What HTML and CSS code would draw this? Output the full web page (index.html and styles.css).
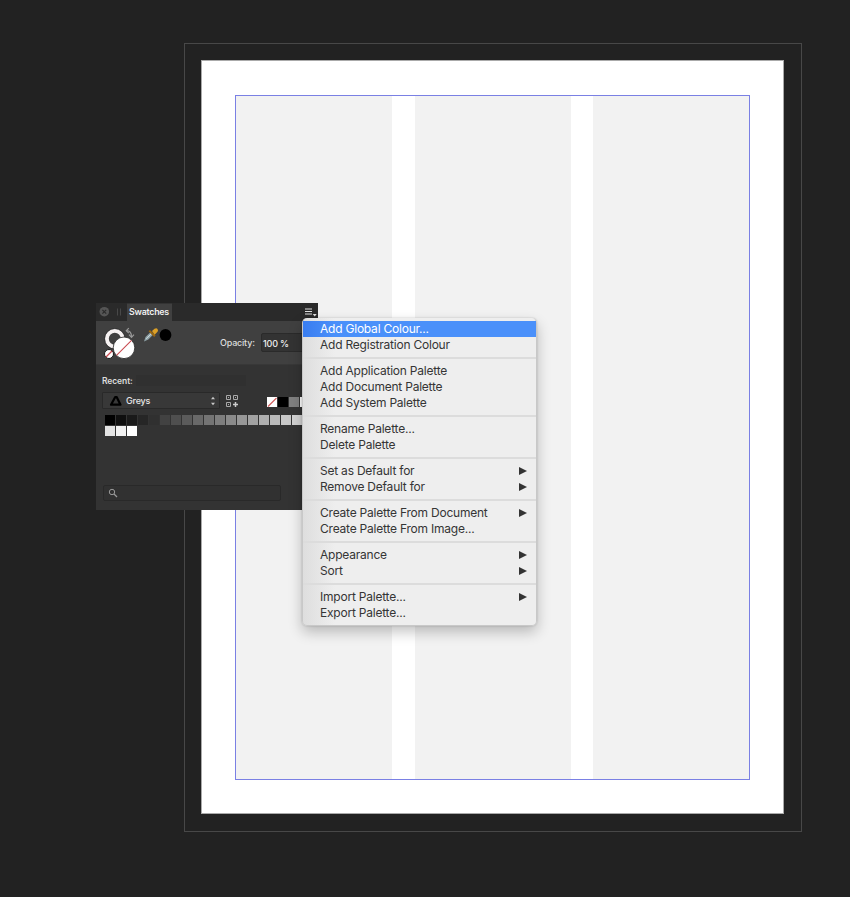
FILE: index.html
```
<!DOCTYPE html>
<html lang="en">
<head>
<meta charset="utf-8">
<title>Swatches</title>
<link rel="stylesheet" href="styles.css">
</head>
<body>
<main class="workspace">
  <div class="bleed">
    <div class="page">
      <div class="margins">
        <div class="column"></div>
        <div class="column"></div>
        <div class="column"></div>
      </div>
    </div>
  </div>

  <section class="panel">
    <header class="panel-header">
      <svg class="header-controls" width="32" height="18" viewBox="0 0 32 18">
        <circle cx="8.300" cy="8.700" r="4.800" fill="#555"/>
        <path d="M6.400 6.800l3.800 3.800M10.200 6.800l-3.800 3.800" stroke="#2b2b2b" stroke-width="1.200"/>
        <path d="M21.500 5.500v7M24.500 5.500v7" stroke="#484848"/>
      </svg>
      <span class="tab">Swatches</span>
      <svg class="header-menu" width="16" height="18" viewBox="0 0 16 18">
        <path d="M3 6h7M3 8.500h7M3 11h7" stroke="#e0e0e0" stroke-width="1.200"/>
        <path d="M10.700 11h4l-2 2.500z" fill="#e0e0e0"/>
      </svg>
    </header>
    <div class="toolbar">
      <svg class="tools" width="84" height="44" viewBox="0 0 84 44">
        <circle cx="18.800" cy="17.800" r="8" fill="none" stroke="#f6f2f2" stroke-width="4"/>
        <circle cx="18.800" cy="17.800" r="10.200" fill="none" stroke="#222" stroke-width=".6"/>
        <circle cx="28" cy="26.800" r="10.800" fill="#fff" stroke="#222" stroke-width=".8"/>
        <path d="M20.500 34.300l15-15" stroke="#c94a50" stroke-width="1.100"/>
        <circle cx="13" cy="33" r="4.500" fill="#fff" stroke="#181818"/>
        <path d="M10 36l6-6" stroke="#c94a50" stroke-width="1.200"/>
        <path d="M30.500 9.700q5 0 5 6.300" fill="none" stroke="#999" stroke-width="1.200"/>
        <path d="M32.800 7.200l-2.500 2.500 2.500 2.500M33 13.700l2.500 2.600 2.500-2.600" fill="none" stroke="#999" stroke-width="1.200"/>
        <path d="M48 20.500l1.500-4.500 5.500-5.300 2.600 2.600-5.300 5.300z" fill="#8fa3a8"/>
        <path d="M50.200 17.900l5.400-5.400" stroke="#d1dadd"/>
        <path d="M53.300 9.600l5.600 5.600" stroke="#9b6710" stroke-width="2"/>
        <path d="M56 10l2.500-2.200q2-1.200 3 .2t0 2.800l-2.800 2.900z" fill="#dda026"/>
        <circle cx="69.500" cy="14" r="5.900" fill="#000"/>
      </svg>
      <span class="opacity-label">Opacity:</span>
      <span class="opacity-field">100 %</span>
    </div>
    <div class="panel-body">
      <div class="recent"><span class="recent-label">Recent:</span><span class="recent-well"></span></div>
      <div class="palette-row">
        <div class="select">
          <svg width="14" height="16" viewBox="0 0 14 16"><path d="M6.100 4.200L2 11.700h9.500L7.800 4.200z" fill="none" stroke="#000" stroke-width="2.200" stroke-linejoin="round"/></svg>
          <span class="select-value">Greys</span>
          <svg width="8" height="16" viewBox="0 0 8 16"><path d="M2 6.200h4L4 3.700zM2 9.800h4l-2 2.500z" fill="#c8c8c8"/></svg>
        </div>
        <svg class="view-icon" width="14" height="14" viewBox="0 0 14 14">
          <g fill="none" stroke="#aaa"><path d="M1.500 1.500h4v4h-4zM8.500 1.500h4v4h-4zM1.500 8.500h4v4h-4z"/><path d="M3 3.500h1M10 3.500h1M3 10.500h1"/><path d="M8 10.500h5M10.500 8v5" stroke="#ccc" stroke-width="1.500"/></g>
        </svg>
        <div class="quick">
          <span class="none"><svg width="10" height="10" viewBox="0 0 10 10"><path d="M1 9.500L9.500 1" stroke="#d05858" stroke-width="1.100"/></svg></span><span class="black"></span><span class="mid"></span><span class="white"></span>
        </div>
      </div>
      <div class="swatches">
        <i class="g0"></i><i class="g1"></i><i class="g2"></i><i class="g3"></i><i class="g4"></i><i class="g5"></i><i class="g6"></i><i class="g7"></i><i class="g8"></i><i class="g9"></i><i class="g10"></i><i class="g11"></i><i class="g12"></i><i class="g13"></i><i class="g14"></i><i class="g15"></i><i class="g16"></i><i class="g17"></i><i class="g18"></i><i class="g19"></i><i class="g20"></i>
      </div>
      <div class="search">
        <svg width="10" height="10" viewBox="0 0 10 10"><circle cx="4" cy="4" r="2.700" fill="none" stroke="#999"/><path d="M6 6l3 3" stroke="#999" stroke-width="1.200"/></svg>
      </div>
    </div>
  </section>

  <ul class="menu">
    <li class="item active"><span>Add Global Colour...</span></li>
    <li class="item"><span>Add Registration Colour</span></li>
    <li class="separator"></li>
    <li class="item"><span>Add Application Palette</span></li>
    <li class="item"><span>Add Document Palette</span></li>
    <li class="item"><span>Add System Palette</span></li>
    <li class="separator"></li>
    <li class="item"><span>Rename Palette...</span></li>
    <li class="item"><span>Delete Palette</span></li>
    <li class="separator"></li>
    <li class="item more"><span>Set as Default for</span></li>
    <li class="item more"><span>Remove Default for</span></li>
    <li class="separator"></li>
    <li class="item more"><span>Create Palette From Document</span></li>
    <li class="item"><span>Create Palette From Image...</span></li>
    <li class="separator"></li>
    <li class="item more"><span>Appearance</span></li>
    <li class="item more"><span>Sort</span></li>
    <li class="separator"></li>
    <li class="item more"><span>Import Palette...</span></li>
    <li class="item"><span>Export Palette...</span></li>
  </ul>
</main>
</body>
</html>
```
FILE: styles.css
```
* { box-sizing: border-box; }
body { margin: 0; background: #222; font-family: Inter, "Liberation Sans", sans-serif; }
svg { display: block; flex: none; }
.workspace { position: relative; width: 850px; height: 897px; overflow: hidden; padding: 43px 0 0 184px; background: #222; }

.bleed { width: 618px; height: 789px; border: 1px solid #484848; padding: 16px; }
.page { width: 583px; height: 754px; background: #fff; border: 1px solid #aaa; padding: 34px 33px; }
.margins { display: flex; justify-content: space-between; width: 515px; height: 685px; border: 1px solid #7a80e4; }
.column { width: 156px; background: #f2f2f2; }

.panel { position: absolute; left: 96px; top: 303px; width: 222px; height: 207px; background: #333; color: #ddd; font-size: 9px; }
.panel-header { display: flex; height: 18px; background: #2a2a2a; }
.header-controls { margin-right: -1px; }
.tab { width: 45px; height: 18px; padding-left: 2px; border-top: 1px solid #333; background: #404040; color: #f0f0f0; font-size: 8.8px; font-weight: 600; line-height: 16px; letter-spacing: -0.22px; white-space: nowrap; }
.header-menu { margin-left: auto; }
.toolbar { display: flex; align-items: center; height: 44px; background: #404040; border-bottom: 1px solid #383838; }
.opacity-label { width: 41px; margin-left: 40px; font-weight: 500; letter-spacing: -0.2px; }
.opacity-field { width: 57px; height: 19px; padding: 1px 0 0 1px; background: #333; border: 1px solid #2a2a2a; border-radius: 2px; color: #eee; font-weight: 500; line-height: 17px; letter-spacing: -0.2px; }
.panel-body { height: 145px; padding: 9px 0 0 6px; }
.recent { display: flex; align-items: center; height: 13px; }
.recent-label { width: 34px; font-weight: 600; font-size: 8.5px; letter-spacing: -0.1px; }
.recent-well { width: 110px; height: 11px; background: #303030; }
.palette-row { display: flex; align-items: center; height: 17px; margin-top: 5px; }
.select { display: flex; align-items: center; width: 118px; height: 17px; padding-left: 6px; border: 1px solid #292929; border-radius: 1px; background: #383838; }
.select-value { flex: 1; padding-left: 3px; font-weight: 500; letter-spacing: -0.2px; color: #e4e4e4; }
.select svg:last-child { margin-right: 2px; }
.view-icon { margin-left: 5px; }
.quick { display: flex; gap: 1px; margin-left: 28px; margin-top: 3px; }
.quick span { width: 10px; height: 10px; }
.none, .white { background: #fff; }
.black { background: #000; }
.mid { background: #808080; }
.swatches { display: grid; grid-template-columns: repeat(18, 10px); grid-auto-rows: 10px; gap: 1px; margin: 6px 0 0 3px; }
.g0 { background: #000; } .g1 { background: #0f0f0f; } .g2 { background: #1a1a1a; } .g3 { background: #262626; }
.g4 { background: #303030; } .g5 { background: #424242; } .g6 { background: #4f4f4f; } .g7 { background: #5b5b5b; }
.g8 { background: #696969; } .g9 { background: #747474; } .g10 { background: #7e7e7e; } .g11 { background: #8a8a8a; }
.g12 { background: #979797; } .g13 { background: #a2a2a2; } .g14 { background: #afafaf; } .g15 { background: #bbb; }
.g16 { background: #c8c8c8; } .g17 { background: #d2d2d2; } .g18 { background: #e3e3e3; } .g19 { background: #f1f1f1; } .g20 { background: #fff; }
.search { display: flex; align-items: center; width: 178px; height: 16px; margin: 49px 0 0 1px; padding-left: 4px; border: 1px solid #292929; border-radius: 2px; background: #313131; }

.menu { position: absolute; left: 302px; top: 318px; width: 235px; height: 308px; margin: 0; padding: 3px 0 4px; list-style: none; border: 1px solid #c8c8c8; border-top: 0; border-radius: 5px; background: linear-gradient(90deg, #dedede, #eee 32px); box-shadow: 0 6px 14px rgba(0,0,0,.24), 0 0 2px rgba(0,0,0,.2); color: #353535; font-size: 12px; letter-spacing: -0.22px; }
.item { display: flex; align-items: center; justify-content: space-between; height: 16px; line-height: 16px; padding: 0 9px 0 17px; white-space: nowrap; }
.active { color: #fff; background: linear-gradient(90deg, #397df0, #4a90fa 32px); }
.more::after { content: ""; border-left: 8px solid #333; border-top: 4px solid transparent; border-bottom: 4px solid transparent; }
.separator { height: 10px; padding-top: 4px; }
.separator::before { content: ""; display: block; height: 2px; background: #dcdcdc; }
```
